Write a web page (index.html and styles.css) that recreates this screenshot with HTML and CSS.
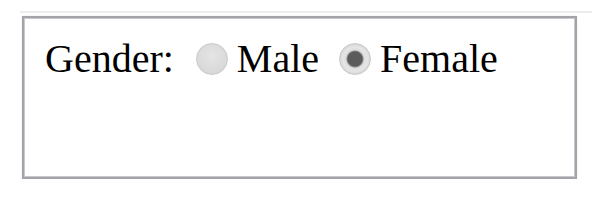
FILE: index.html
```html
<!DOCTYPE html>
<html lang="en">
<head>
<meta charset="UTF-8">
<meta name="viewport" content="width=device-width, initial-scale=1.0">
<title>Gender</title>
<link rel="stylesheet" href="styles.css">
</head>
<body>
  <div class="page">
    <div class="rule"></div>
    <form class="box">
      <div class="field">
        <span class="label">Gender:</span>
        <label class="option">
          <input type="radio" name="gender" value="male">
          <span>Male</span>
        </label>
        <label class="option">
          <input type="radio" name="gender" value="female" checked>
          <span>Female</span>
        </label>
      </div>
    </form>
  </div>
</body>
</html>
```

FILE: styles.css
```css
body {
  margin: 0;
  background-color: #ffffff;
  font-family: "Liberation Serif", "Times New Roman", serif;
  color: #000000;
}
.page {
  padding: 11px 16px 0 20px;
}
.rule {
  height: 2px;
  background-color: #ededee;
}
.box {
  box-sizing: border-box;
  width: 555px;
  height: 163px;
  margin: 3px 0 0 2px;
  padding: 18px 0 0 21px;
  border: 2px solid #a3a4a9;
  box-shadow: inset 0 0 0 1px #c8c9cd, 0 0 2px rgba(0,0,0,0.1);
  background-color: #ffffff;
}
.field {
  display: flex;
  align-items: center;
  font-size: 40px;
  line-height: 46px;
}
.label {
  margin-right: 22px;
}
.option {
  display: flex;
  align-items: center;
  margin-right: 20px;
}
.option input {
  appearance: none;
  -webkit-appearance: none;
  box-sizing: border-box;
  width: 32px;
  height: 32px;
  margin: 0 9px 0 0;
  border: 1px solid #c9c9c9;
  border-radius: 50%;
  background: radial-gradient(circle at 50% 40%, #e4e4e4 0%, #d9d9d9 70%, #cfcfcf 100%);
}
.option input:checked {
  background: radial-gradient(circle, #5b5b5b 0, #5b5b5b 7px, #8a8a8a 8px, #dcdcdc 9px, #e6e6e6 12px, #d2d2d2 16px);
}
```
